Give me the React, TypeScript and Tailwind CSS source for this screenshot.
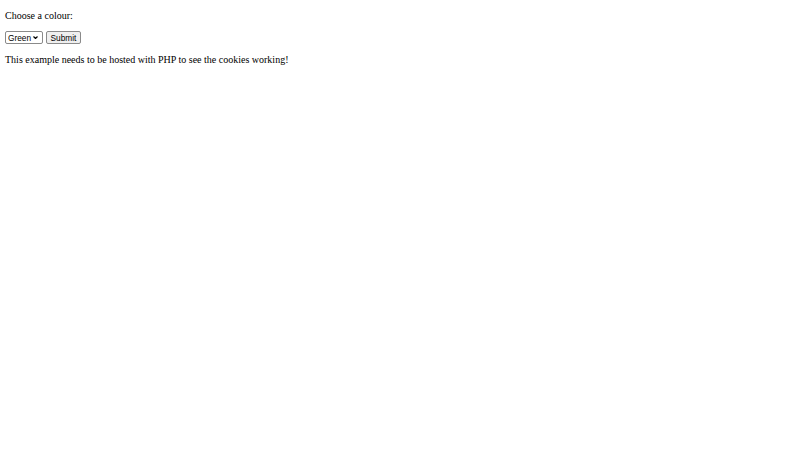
export default function App() {
  return (
    <div className="min-h-[450px] bg-white pl-[5px] pt-[10px] font-['Liberation_Serif',serif] text-[10px] leading-[11.5px] text-black">
      <p>Choose a colour:</p>
      <form className="mt-[9px] flex h-[14px] items-center gap-[3px]" onSubmit={(e) => e.preventDefault()}>
        <div className="relative h-[13px] w-[38px]">
          <select
            defaultValue="green"
            className="h-full w-full appearance-none rounded-[2px] border border-[#8a8a8a] bg-white p-0 pl-[2px] font-['Liberation_Sans',sans-serif] text-[8.3px] leading-[10px] text-black"
          >
            <option value="red">Red</option>
            <option value="green">Green</option>
            <option value="blue">Blue</option>
          </select>
          <svg className="pointer-events-none absolute right-[5px] top-[5px] h-[3px] w-[5px]" viewBox="0 0 5 3" fill="none">
            <path d="M0.5 0.5 L2.5 2.5 L4.5 0.5" stroke="#000" strokeWidth="1.2" />
          </svg>
        </div>
        <button
          type="submit"
          className="h-[13.5px] w-[35px] rounded-[2px] border border-[#8a8a8a] bg-[#efefef] p-0 font-['Liberation_Sans',sans-serif] text-[8.3px] leading-[10px] text-black"
        >
          Submit
        </button>
      </form>
      <p className="mt-[9px]">This example needs to be hosted with PHP to see the cookies working!</p>
    </div>
  );
}
